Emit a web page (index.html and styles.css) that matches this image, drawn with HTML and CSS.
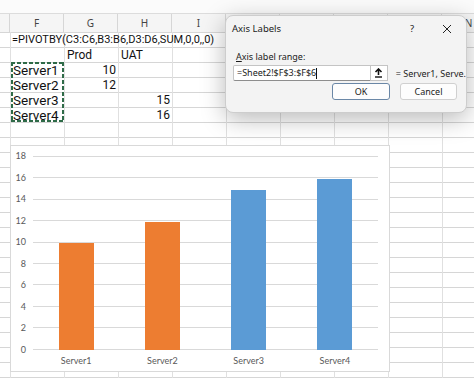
FILE: index.html
```html
<!DOCTYPE html>
<html lang="en">
<head>
    <meta charset="UTF-8">
    <meta name="viewport" content="width=device-width, initial-scale=1.0">
    <title>Axis Labels</title>
    <link rel="stylesheet" href="styles.css">
</head>
<body>

    <div class="workbook">
        <div class="topband"></div>

        <!-- Column headers (J to M sit under the dialog) -->
        <div class="colheads">
            <div class="colhead"></div>
            <div class="colhead">F</div>
            <div class="colhead">G</div>
            <div class="colhead">H</div>
            <div class="colhead">I</div>
            <div class="colhead"></div>
            <div class="colhead"></div>
            <div class="colhead"></div>
            <div class="colhead"></div>
            <div class="colhead">N</div>
        </div>

        <!-- Cells -->
        <div class="grid">
            <div class="cell f formula">=PIVOTBY(C3:C6,B3:B6,D3:D6,SUM,0,0,,0)</div>

            <div class="cell f"></div>
            <div class="cell">Prod</div>
            <div class="cell">UAT</div>

            <div class="cell f label">Server1</div>
            <div class="cell num">10</div>

            <div class="cell f label">Server2</div>
            <div class="cell num">12</div>

            <div class="cell f label">Server3</div>
            <div class="cell"></div>
            <div class="cell num">15</div>

            <div class="cell f label">Server4</div>
            <div class="cell"></div>
            <div class="cell num">16</div>

            <!-- copy selection -->
            <div class="marquee"></div>
        </div>

        <!-- Chart -->
        <div class="chart">
            <div class="axis">
                <span>18</span><span>16</span><span>14</span><span>12</span><span>10</span>
                <span>8</span><span>6</span><span>4</span><span>2</span><span>0</span>
            </div>
            <div class="plot">
                <div class="slot"><div class="bar prod" style="height: 107px"></div></div>
                <div class="slot"><div class="bar prod" style="height: 128.4px"></div></div>
                <div class="slot"><div class="bar uat" style="height: 160.5px"></div></div>
                <div class="slot"><div class="bar uat" style="height: 171.2px"></div></div>
            </div>
            <div class="categories">
                <span>Server1</span><span>Server2</span><span>Server3</span><span>Server4</span>
            </div>
        </div>

        <!-- Axis Labels dialog -->
        <div class="dialog">
            <div class="dlg-title">
                <span class="dlg-name">Axis Labels</span>
                <span class="dlg-help">?</span>
                <span class="dlg-close">
                    <svg width="10" height="10" viewBox="0 0 10 10">
                        <path d="M1 1 L9 9 M9 1 L1 9" stroke="#222" stroke-width="1" fill="none"/>
                    </svg>
                </span>
            </div>
            <div class="dlg-body">
                <div class="dlg-label"><u>A</u>xis label range:</div>
                <div class="dlg-row">
                    <div class="dlg-input">=Sheet2!$F$3:$F$6<span class="caret"></span></div>
                    <div class="dlg-collapse">
                        <svg width="9" height="10" viewBox="0 0 9 10">
                            <path d="M4.5 1 L4.5 7 M1.5 4 L4.5 1 L7.5 4" stroke="#111" stroke-width="1.6" fill="none"/>
                            <path d="M1 9 L8 9" stroke="#111" stroke-width="1.4"/>
                        </svg>
                    </div>
                    <span class="dlg-result">= Server1, Serve.</span>
                </div>
                <div class="dlg-buttons">
                    <button class="btn default">OK</button>
                    <button class="btn">Cancel</button>
                </div>
            </div>
        </div>
    </div>

</body>
</html>
```

FILE: styles.css
```css
/* Hoja */
body {
    margin: 0;
    padding: 0;
    background-color: #fff;
    font-family: Roboto, "Liberation Sans", sans-serif;
}
.workbook {
    position: relative;
    width: 474px;
    height: 378px;
    overflow: hidden;
}
.topband {
    height: 13px;
    background-color: #fbfbfb;
}
.colheads {
    display: grid;
    grid-template-columns: 10px repeat(9, 54px);
    height: 19px;
    background-color: #f5f5f5;
    border-top: 1px solid #dcdcdc;
    box-sizing: border-box;
}
.colhead {
    border-right: 1px solid #d6d6d6;
    font-family: "Noto Sans", sans-serif;
    font-size: 10px;
    line-height: 18px;
    color: #444;
    text-align: center;
}
.grid {
    position: relative;
    display: grid;
    grid-template-columns: 10px repeat(9, 54px);
    grid-auto-rows: 15px;
    height: 346px;
    background-image:
        linear-gradient(to right, #e0e0e0 1px, transparent 1px),
        linear-gradient(to bottom, #d6d6d6 1px, transparent 1px);
    background-size: 54px 15px, 54px 15px;
    background-position: 10px 0, 0 0;
}
.cell {
    font-size: 12px;
    line-height: 16px;
    color: #111;
    padding: 0 2px 0 3px;
    white-space: nowrap;
}
.cell.f { grid-column: 2; }
.cell.formula { font-size: 11px; padding-left: 2px; }
.cell.label { font-size: 13.5px; }
.cell.num { text-align: right; }
.marquee {
    position: absolute;
    left: 11px;
    top: 30px;
    width: 53px;
    height: 60px;
    background:
        repeating-linear-gradient(to right, #2f6b48 0 4px, transparent 4px 6px) top / 100% 2px no-repeat,
        repeating-linear-gradient(to right, #2f6b48 0 4px, transparent 4px 6px) bottom / 100% 2px no-repeat,
        repeating-linear-gradient(to bottom, #2f6b48 0 4px, transparent 4px 6px) left / 2px 100% no-repeat,
        repeating-linear-gradient(to bottom, #2f6b48 0 4px, transparent 4px 6px) right / 2px 100% no-repeat;
}

/* Grafico */
.chart {
    position: absolute;
    left: 10px;
    top: 145px;
    width: 380px;
    height: 227px;
    box-sizing: border-box;
    border: 1px solid #d9d9d9;
    background-color: #fff;
    padding-top: 10px;
    display: grid;
    grid-template-columns: 22px 345px;
    grid-template-rows: 194px auto;
    font-family: Lato, sans-serif;
    font-size: 9px;
    color: #595959;
}
.axis {
    margin: -7px 0;
    padding-right: 7px;
    display: flex;
    flex-direction: column;
    justify-content: space-between;
    align-items: flex-end;
}
.axis span { line-height: 14px; }
.plot {
    display: flex;
    align-items: flex-end;
    background-image: repeating-linear-gradient(to bottom, #d9d9d9 0 1px, transparent 1px 21.4px);
}
.slot {
    flex: 1;
    display: flex;
    justify-content: center;
}
.bar { width: 35px; }
.bar.prod { background-color: #ed7d31; }
.bar.uat { background-color: #5b9bd5; }
.categories {
    grid-column: 2;
    display: flex;
    margin-top: 4px;
}
.categories span {
    flex: 1;
    text-align: center;
    line-height: 14px;
}

/* Dialogo */
.dialog {
    position: absolute;
    left: 225px;
    top: 15px;
    width: 242px;
    height: 98px;
    box-sizing: border-box;
    background-color: #f3f3f3;
    border: 1px solid #cdcdcd;
    border-radius: 8px;
    box-shadow: 0 6px 24px rgba(0, 0, 0, 0.28);
    font-family: "Noto Sans", sans-serif;
    font-size: 9px;
    color: #1b1b1b;
}
.dlg-title {
    display: flex;
    align-items: center;
    height: 25px;
    padding-left: 6px;
    font-size: 9.5px;
}
.dlg-name { flex: 1; }
.dlg-help { width: 10px; text-align: center; margin-right: 25px; }
.dlg-close { width: 10px; height: 10px; margin-right: 14px; }
.dlg-body { padding-left: 7px; }
.dlg-label {
    margin-top: 10px;
    line-height: 12px;
    padding-left: 3px;
}
.dlg-row {
    display: flex;
    align-items: center;
    margin-top: 2px;
    height: 16px;
}
.dlg-input {
    width: 142px;
    height: 16px;
    box-sizing: border-box;
    background-color: #fff;
    border: 1px solid #c4c4c4;
    border-bottom-color: #8d8d8d;
    border-radius: 2px 0 0 2px;
    line-height: 14px;
    padding-left: 3px;
    display: flex;
    align-items: center;
}
.caret {
    width: 1px;
    height: 11px;
    background-color: #111;
}
.dlg-collapse {
    width: 17px;
    height: 16px;
    box-sizing: border-box;
    background-color: #fff;
    border: 1px solid #c4c4c4;
    border-left: none;
    display: flex;
    align-items: center;
    justify-content: center;
}
.dlg-result {
    margin-left: 8px;
    white-space: nowrap;
}
.dlg-buttons {
    display: flex;
    gap: 10px;
    margin-top: 2px;
    padding-left: 99px;
}
.btn {
    width: 57px;
    height: 17px;
    padding: 0;
    background-color: #fdfdfd;
    border: 1px solid #d0d0d0;
    border-radius: 3px;
    font-family: "Noto Sans", sans-serif;
    font-size: 9px;
    color: #1b1b1b;
}
.btn.default {
    width: 58px;
    border-color: #6a87a6;
}
```
